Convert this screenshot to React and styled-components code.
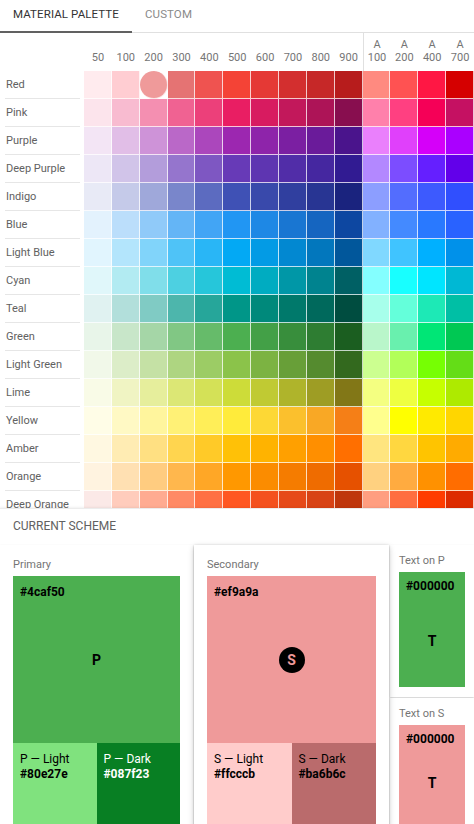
import React from 'react'
import styled, { createGlobalStyle } from 'styled-components'

const GlobalStyle = createGlobalStyle`
    html, body {
        margin: 0;
        padding: 0;
        background: #fff;
        font-family: Roboto, 'Noto Sans', Arial, sans-serif;
    }
    * {
        box-sizing: border-box;
    }
`

const SHADES = ['50', '100', '200', '300', '400', '500', '600', '700', '800', '900', 'A100', 'A200', 'A400', 'A700']

const PALETTE = [
    ['Red', 'ffebee ffcdd2 ef9a9a e57373 ef5350 f44336 e53935 d32f2f c62828 b71c1c ff8a80 ff5252 ff1744 d50000'],
    ['Pink', 'fce4ec f8bbd0 f48fb1 f06292 ec407a e91e63 d81b60 c2185b ad1457 880e4f ff80ab ff4081 f50057 c51162'],
    ['Purple', 'f3e5f5 e1bee7 ce93d8 ba68c8 ab47bc 9c27b0 8e24aa 7b1fa2 6a1b9a 4a148c ea80fc e040fb d500f9 aa00ff'],
    ['Deep Purple', 'ede7f6 d1c4e9 b39ddb 9575cd 7e57c2 673ab7 5e35b1 512da8 4527a0 311b92 b388ff 7c4dff 651fff 6200ea'],
    ['Indigo', 'e8eaf6 c5cae9 9fa8da 7986cb 5c6bc0 3f51b5 3949ab 303f9f 283593 1a237e 8c9eff 536dfe 3d5afe 304ffe'],
    ['Blue', 'e3f2fd bbdefb 90caf9 64b5f6 42a5f5 2196f3 1e88e5 1976d2 1565c0 0d47a1 82b1ff 448aff 2979ff 2962ff'],
    ['Light Blue', 'e1f5fe b3e5fc 81d4fa 4fc3f7 29b6f6 03a9f4 039be5 0288d1 0277bd 01579b 80d8ff 40c4ff 00b0ff 0091ea'],
    ['Cyan', 'e0f7fa b2ebf2 80deea 4dd0e1 26c6da 00bcd4 00acc1 0097a7 00838f 006064 84ffff 18ffff 00e5ff 00b8d4'],
    ['Teal', 'e0f2f1 b2dfdb 80cbc4 4db6ac 26a69a 009688 00897b 00796b 00695c 004d40 a7ffeb 64ffda 1de9b6 00bfa5'],
    ['Green', 'e8f5e9 c8e6c9 a5d6a7 81c784 66bb6a 4caf50 43a047 388e3c 2e7d32 1b5e20 b9f6ca 69f0ae 00e676 00c853'],
    ['Light Green', 'f1f8e9 dcedc8 c5e1a5 aed581 9ccc65 8bc34a 7cb342 689f38 558b2f 33691e ccff90 b2ff59 76ff03 64dd17'],
    ['Lime', 'f9fbe7 f0f4c3 e6ee9c dce775 d4e157 cddc39 c0ca33 afb42b 9e9d24 827717 f4ff81 eeff41 c6ff00 aeea00'],
    ['Yellow', 'fffde7 fff9c4 fff59d fff176 ffee58 ffeb3b fdd835 fbc02d f9a825 f57f17 ffff8d ffff00 ffea00 ffd600'],
    ['Amber', 'fff8e1 ffecb3 ffe082 ffd54f ffca28 ffc107 ffb300 ffa000 ff8f00 ff6f00 ffe57f ffd740 ffc400 ffab00'],
    ['Orange', 'fff3e0 ffe0b2 ffcc80 ffb74d ffa726 ff9800 fb8c00 f57c00 ef6c00 e65100 ffd180 ffab40 ff9100 ff6d00'],
    ['Deep Orange', 'fbe9e7 ffccbc ffab91 ff8a65 ff7043 ff5722 f4511e e64a19 d84315 bf360c ff9e80 ff6e40 ff3d00 dd2c00'],
]

const Page = styled.div`
    width: 474px;
    height: 824px;
    overflow: hidden;
    display: flex;
    flex-direction: column;
`

const Tabs = styled.nav`
    display: flex;
    height: 33px;
    border-bottom: 1px solid #e0e0e0;
    flex-shrink: 0;
`

const Tab = styled.div`
    width: ${props => props.width}px;
    padding-left: 13px;
    padding-top: 7px;
    font-size: 11.5px;
    letter-spacing: 0.1px;
    color: ${props => (props.active ? '#333' : '#8a8a8a')};
    border-bottom: ${props => (props.active ? '2px solid #616161' : 'none')};
    margin-bottom: -1px;
`

const PaletteArea = styled.section`
    height: 475px;
    overflow: hidden;
    flex-shrink: 0;
`

const Row = styled.div`
    display: grid;
    grid-template-columns: 84px repeat(14, 1fr);
    height: ${props => (props.header ? 38 : 28)}px;
`

const HeadCell = styled.div`
    display: flex;
    flex-direction: column;
    align-items: center;
    justify-content: flex-end;
    padding-bottom: 7px;
    font-size: 11px;
    line-height: 13px;
    color: #757575;
    border-left: ${props => (props.divider ? '1px solid #e0e0e0' : 'none')};
`

const RowLabel = styled.div`
    display: flex;
    align-items: center;
    margin: 0 4px 0 5px;
    padding-left: 1px;
    font-size: 11px;
    color: #616161;
    border-bottom: 1px solid #e6e6e6;
    white-space: nowrap;
`

const Cell = styled.div`
    background: ${props => props.color};
    border-right: 1px solid rgba(255, 255, 255, 0.75);
    border-bottom: 1px solid rgba(255, 255, 255, 0.75);
    border-radius: ${props => (props.selected ? '50%' : '0')};
`

const Scheme = styled.section`
    flex: 1;
    border-top: 1px solid #ececec;
    box-shadow: 0 -1px 2px rgba(0, 0, 0, 0.06);
    position: relative;
    z-index: 1;
    background: #fff;
    display: flex;
    flex-direction: column;
`

const SchemeTitle = styled.h2`
    margin: 0;
    padding: 10px 13px 0;
    height: 36px;
    font-size: 12px;
    font-weight: 400;
    color: #616161;
`

const Cards = styled.div`
    display: grid;
    grid-template-columns: 193px 195px 1fr;
    gap: 1px;
    align-items: start;
`

const Card = styled.div`
    background: #fff;
    padding: ${props => (props.narrow ? '9px 9px 10px' : '13px 13px 13px')};
    box-shadow: ${props =>
        props.raised
            ? '0 2px 6px rgba(0, 0, 0, 0.22), 0 0 2px rgba(0, 0, 0, 0.12)'
            : '0 1px 2px rgba(0, 0, 0, 0.2)'};
    position: relative;
    z-index: ${props => (props.raised ? 2 : 1)};
`

const Column = styled.div`
    display: flex;
    flex-direction: column;
    gap: 1px;
`

const CardLabel = styled.div`
    font-size: 11px;
    color: #757575;
    line-height: 13px;
    margin-bottom: ${props => (props.narrow ? 5 : 5)}px;
`

const MainSwatch = styled.div`
    position: relative;
    height: 167px;
    background: ${props => props.color};
    display: flex;
    align-items: center;
    justify-content: center;
`

const Hex = styled.div`
    position: absolute;
    top: 9px;
    left: 7px;
    font-size: 12px;
    font-weight: 700;
    color: ${props => props.ink};
`

const Letter = styled.span`
    font-size: 14px;
    font-weight: 700;
    color: ${props => props.ink};
`

const Badge = styled.span`
    width: 26px;
    height: 26px;
    border-radius: 50%;
    background: #000;
    color: ${props => props.ink};
    font-size: 14px;
    font-weight: 700;
    display: flex;
    align-items: center;
    justify-content: center;
`

const Variants = styled.div`
    display: grid;
    grid-template-columns: 1fr 1fr;
`

const Variant = styled.div`
    height: 84px;
    background: ${props => props.color};
    color: ${props => props.ink};
    padding: 9px 7px;
    font-size: 12px;
    line-height: 15px;
`

const VariantHex = styled.div`
    font-weight: 700;
`

const TextSwatch = styled.div`
    height: ${props => props.height}px;
    background: ${props => props.color};
    display: flex;
    flex-direction: column;
    padding: 7px 7px ${props => props.bottom}px;
`

const TextHex = styled.div`
    font-size: 12px;
    font-weight: 700;
    color: #000;
    line-height: 15px;
`

const TextLetter = styled.div`
    flex: 1;
    display: flex;
    align-items: center;
    justify-content: center;
    font-size: 14px;
    font-weight: 700;
    color: #000;
`

const ColorCard = ({ label, hex, letter, badge, ink, light, dark, raised }) => (
    <Card raised={raised}>
        <CardLabel>{label}</CardLabel>
        <MainSwatch color={hex}>
            <Hex ink={ink}>{hex}</Hex>
            {badge ? <Badge ink={hex}>{letter}</Badge> : <Letter ink={ink}>{letter}</Letter>}
        </MainSwatch>
        <Variants>
            {[light, dark].map(v => (
                <Variant key={v.name} color={v.hex} ink={v.ink}>
                    <div>{v.name}</div>
                    <VariantHex>{v.hex}</VariantHex>
                </Variant>
            ))}
        </Variants>
    </Card>
)

const TextCard = ({ label, color, height, bottom = 0 }) => (
    <Card narrow>
        <CardLabel narrow>{label}</CardLabel>
        <TextSwatch color={color} height={height} bottom={bottom}>
            <TextHex>#000000</TextHex>
            <TextLetter>T</TextLetter>
        </TextSwatch>
    </Card>
)

const App = () => (
    <Page>
        <GlobalStyle />
        <Tabs>
            <Tab active width={132}>MATERIAL PALETTE</Tab>
            <Tab width={100}>CUSTOM</Tab>
        </Tabs>
        <PaletteArea>
            <Row header>
                <div />
                {SHADES.map((s, i) => (
                    <HeadCell key={s} divider={i === 10}>
                        {s.startsWith('A') && <span>A</span>}
                        <span>{s.replace('A', '')}</span>
                    </HeadCell>
                ))}
            </Row>
            {PALETTE.map(([name, colors]) => (
                <Row key={name}>
                    <RowLabel>{name}</RowLabel>
                    {colors.split(' ').map((c, i) => (
                        <Cell key={i} color={'#' + c} selected={name === 'Red' && i === 2} />
                    ))}
                </Row>
            ))}
        </PaletteArea>
        <Scheme>
            <SchemeTitle>CURRENT SCHEME</SchemeTitle>
            <Cards>
                <ColorCard
                    label="Primary"
                    hex="#4caf50"
                    letter="P"
                    ink="#000"
                    light={{ name: 'P — Light', hex: '#80e27e', ink: '#000' }}
                    dark={{ name: 'P — Dark', hex: '#087f23', ink: '#fff' }}
                />
                <ColorCard
                    raised
                    badge
                    label="Secondary"
                    hex="#ef9a9a"
                    letter="S"
                    ink="#000"
                    light={{ name: 'S — Light', hex: '#ffcccb', ink: '#000' }}
                    dark={{ name: 'S — Dark', hex: '#ba6b6c', ink: '#000' }}
                />
                <Column>
                    <TextCard label="Text on P" color="#4caf50" height={115} />
                    <TextCard label="Text on S" color="#ef9a9a" height={104} bottom={10} />
                </Column>
            </Cards>
        </Scheme>
    </Page>
)

export default App
